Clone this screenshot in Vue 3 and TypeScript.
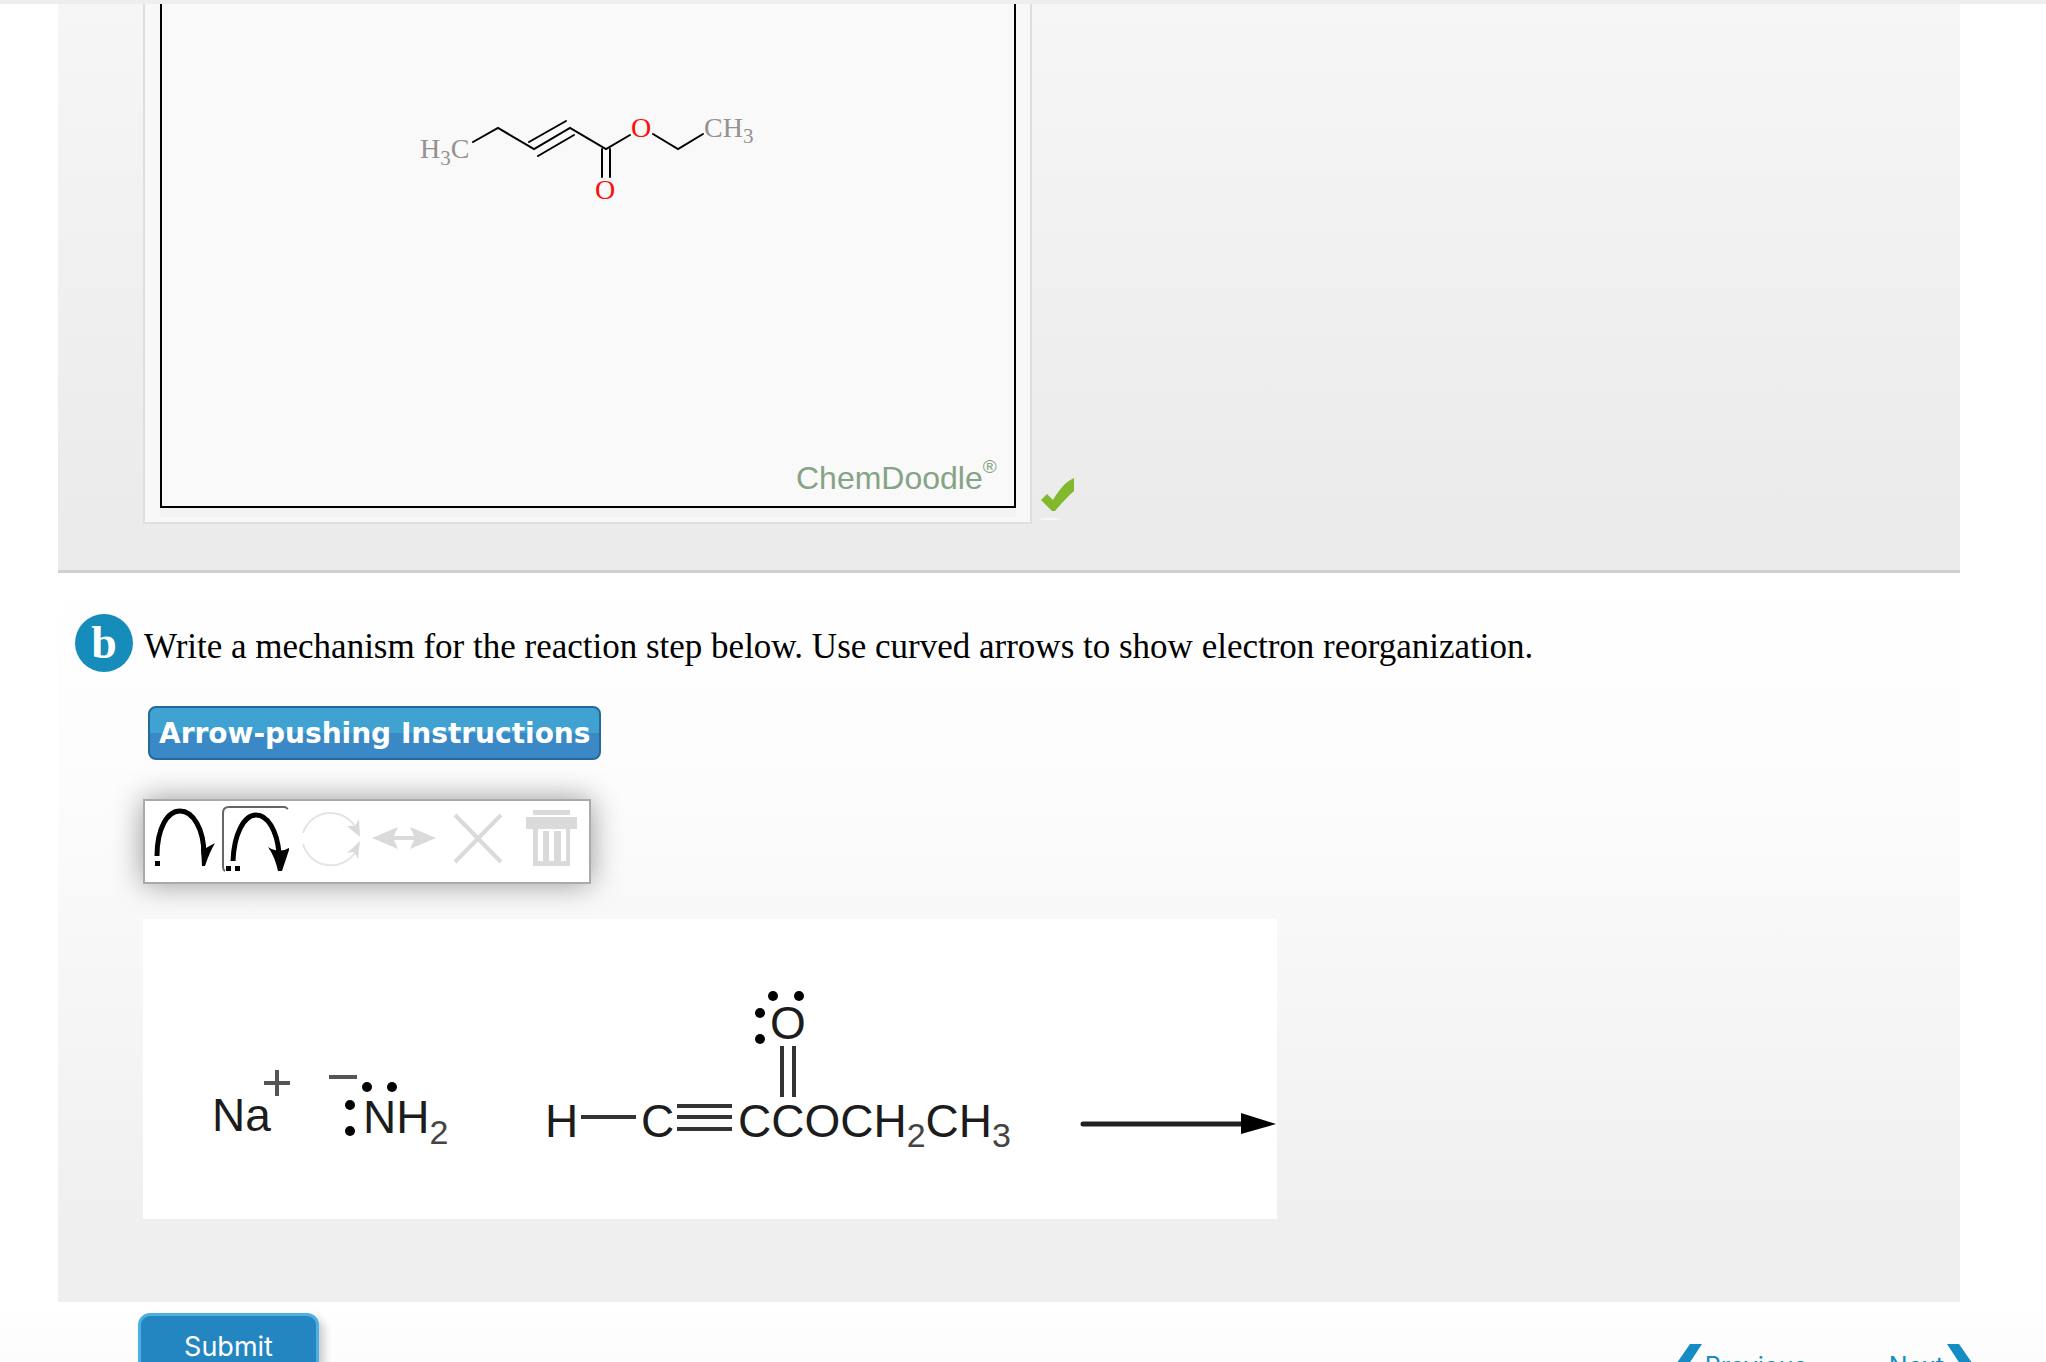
<script setup lang="ts">
import { ref } from 'vue'

type Tool = 'single' | 'double'
const activeTool = ref<Tool>('double')
</script>

<template>
  <main class="page">
    <div class="top-strip"></div>

    <section class="part part-a" aria-label="Part a">
      <div class="sketch-row">
        <div class="frame">
          <div class="canvas">
            <svg class="drawing" viewBox="0 0 852 502" role="img" aria-label="Ethyl pent-2-ynoate">
              <g class="bond">
                <path d="M311 138 L336 124 L372 145 L408 124 L444 145 L468 131" />
                <path d="M367 138 L404 117 M376 152 L412 131" />
                <path d="M440 145 V173 M448 145 V173" />
                <path d="M491 130 L516 145 L541 130" />
              </g>
              <g class="atom">
                <text x="258" y="154">H<tspan class="atom-sub" dy="7">3</tspan><tspan dy="-7">C</tspan></text>
                <text x="542" y="133">CH<tspan class="atom-sub" dy="6">3</tspan></text>
                <text class="oxygen" x="479" y="133">O</text>
                <text class="oxygen" x="443" y="195">O</text>
              </g>
              <text class="brand" x="634" y="485">ChemDoodle<tspan class="brand-mark" dy="-16">®</tspan></text>
            </svg>
          </div>
          <div class="canvas-foot"></div>
        </div>
        <svg class="check" viewBox="0 0 36 46" role="img" aria-label="Correct">
          <path d="M3 22 L9 16 L15 22 C21 12 27 4 36 0 V13 C29 19 23 26 17 33 H14 Z" fill="#82b92c" />
          <ellipse cx="12" cy="41" rx="11" ry="1" fill="#f7f7f7" />
        </svg>
      </div>
    </section>

    <section class="part part-b" aria-labelledby="question-b">
      <header class="question">
        <span class="letter">b</span>
        <p id="question-b" class="prompt">
          Write a mechanism for the reaction step below. Use curved arrows to show electron reorganization.
        </p>
      </header>

      <button type="button" class="instructions">Arrow-pushing Instructions</button>

      <div class="toolbar" role="toolbar" aria-label="Arrow tools">
        <button type="button" class="tool" aria-label="Single electron arrow" :aria-pressed="activeTool === 'single'" @click="activeTool = 'single'">
          <svg viewBox="0 0 74 81">
            <path d="M12 55 C12 28 22 10 35 10 C48 10 59 28 59 54" fill="none" stroke="#000" stroke-width="5" />
            <path d="M56 46 L61 47 L70 42 C66 49 63 56 60 65 H57 Z" />
            <rect x="10" y="60" width="5" height="5" />
          </svg>
        </button>
        <button type="button" class="tool" aria-label="Electron pair arrow" :aria-pressed="activeTool === 'double'" @click="activeTool = 'double'">
          <svg viewBox="0 0 74 81">
            <path v-if="activeTool === 'double'" d="M6 70 Q4 69 4 66 V12 Q4 6 10 6 H66 L69 8" fill="none" stroke="#666" stroke-width="2" />
            <path d="M14 60 C15 33 25 14 37 14 C49 14 58 30 60 52" fill="none" stroke="#000" stroke-width="5" />
            <path d="M49 46 Q60 53 70 47 V49 L63 70 H59 C57 61 54 53 49 46 Z" />
            <rect x="7" y="65" width="5" height="5" />
            <rect x="16" y="65" width="5" height="5" />
          </svg>
        </button>
        <button type="button" class="tool" aria-label="Rotate" disabled>
          <svg viewBox="0 0 74 81">
            <path d="M10 32 A29 29 0 0 1 63 27 M10 43 A29 29 0 0 0 63 50" fill="none" stroke="#e4e4e4" stroke-width="2" />
            <path d="M67 36 L66 18 L62 25 L54 25 Z M67 40 L54 52 L61 51 L65 58 Z" />
          </svg>
        </button>
        <button type="button" class="tool" aria-label="Resonance arrow" disabled>
          <svg viewBox="0 0 74 81">
            <path d="M24 37 H50" fill="none" stroke="#dadada" stroke-width="4" />
            <path d="M5 37 L31 26 L26 37 L31 48 Z M69 37 L43 26 L48 37 L43 48 Z" />
          </svg>
        </button>
        <button type="button" class="tool" aria-label="Delete arrow" disabled>
          <svg viewBox="0 0 74 81">
            <path d="M14 14 L60 61 M60 14 L14 61" fill="none" stroke="#dadada" stroke-width="4" />
          </svg>
        </button>
        <button type="button" class="tool" aria-label="Clear all" disabled>
          <svg viewBox="0 0 74 81">
            <path fill-rule="evenodd" d="M18 9 H55 V14 H18 Z M11 16 H62 V28 H55 V65 H18 V28 H11 Z M23 28 V60 H51 V28 Z" />
            <path d="M28 30 H34 V61 H28 Z M39 30 H46 V61 H39 Z" />
          </svg>
        </button>
      </div>

      <svg class="reaction" viewBox="0 0 1134 300" role="img" aria-label="Sodium amide with ethyl propiolate">
        <g class="formula">
          <text x="69" y="212">Na</text>
          <text x="220" y="214">NH<tspan class="formula-sub" dy="11">2</tspan></text>
          <text x="402" y="218">H</text>
          <text x="498" y="218">C</text>
          <text x="595" y="218">CCOCH<tspan class="formula-sub" dy="10">2</tspan><tspan dy="-10">CH</tspan><tspan class="formula-sub" dy="10">3</tspan></text>
          <text x="627" y="120">O</text>
        </g>
        <g class="charge">
          <path d="M121 164 H147 M134 151 V177" />
          <path d="M186 158 H214" />
        </g>
        <g class="link">
          <path d="M438 198 H493" />
          <path d="M534 187 H589 M534 198 H589 M534 210 H589" />
          <path d="M639 127 V178 M651 127 V178" />
        </g>
        <g class="electrons">
          <circle cx="224" cy="168" r="5" />
          <circle cx="249" cy="168" r="5" />
          <circle cx="207" cy="186" r="5" />
          <circle cx="207" cy="212" r="5" />
          <circle cx="630" cy="77" r="5" />
          <circle cx="656" cy="77" r="5" />
          <circle cx="617" cy="94" r="5" />
          <circle cx="617" cy="120" r="5" />
        </g>
        <path d="M940 205 H1100" fill="none" stroke="#222" stroke-width="5" stroke-linecap="round" />
        <path d="M1098 194 L1133 205 L1098 215 Z" />
      </svg>
    </section>

    <footer class="actions">
      <button type="button" class="submit">Submit</button>
      <nav class="pager" aria-label="Question">
        <a href="#previous">
          <svg viewBox="0 0 30 52"><path d="M18 0 H30 L13 26 L30 52 H18 L0 26 Z" /></svg>
          <span>Previous</span>
        </a>
        <a href="#next">
          <span>Next</span>
          <svg viewBox="0 0 30 52"><path d="M12 0 H0 L17 26 L0 52 H12 L30 26 Z" /></svg>
        </a>
      </nav>
    </footer>
  </main>
</template>

<style>
body {
  margin: 0;
  background: #fff;
}
</style>

<style scoped>
.page {
  height: 100vh;
  overflow: hidden;
  font-family: "Liberation Serif", "Times New Roman", serif;
  color: #000;
}

.top-strip {
  height: 4px;
  background: #eee;
}

.part {
  margin: 0 86px 0 58px;
}

.part-a {
  padding: 0 85px 46px;
  border-bottom: 3px solid #d0d0d0;
  background: linear-gradient(#f6f6f6, #ebebeb 90%);
}

.sketch-row {
  display: flex;
  align-items: flex-end;
  gap: 6px;
}

.frame {
  flex: none;
  padding: 0 14px 5px 15px;
  border: 2px solid #dfdfdf;
  border-top: 0;
  background: #f8f8f8;
}

.canvas {
  border: 2px solid #000;
  border-top: 0;
  background: #f9f9f9;
}

.drawing {
  display: block;
  width: 852px;
}

.canvas-foot {
  height: 9px;
  background: #f3f3f3;
}

.bond {
  fill: none;
  stroke: #000;
  stroke-width: 2;
  stroke-linecap: round;
}

.atom {
  font-size: 28px;
  fill: #979090;
}

.atom-sub {
  font-size: 21px;
}

.oxygen {
  fill: #ff0d0d;
  text-anchor: middle;
}

.brand {
  font-family: "Liberation Sans", Arial, sans-serif;
  font-size: 32px;
  fill: #86a386;
}

.brand-mark {
  font-size: 19px;
}

.check {
  flex: none;
  width: 36px;
  height: 46px;
}

.part-b {
  display: flex;
  flex-direction: column;
  align-items: flex-start;
  padding: 41px 17px 83px;
  background: linear-gradient(#fff, #fcfcfc 30%, #efefef 90%);
}

.question {
  display: flex;
  gap: 11px;
}

.letter {
  flex: none;
  width: 58px;
  height: 58px;
  border-radius: 50%;
  background: #158cba;
  color: #fff;
  font-size: 46px;
  font-weight: bold;
  line-height: 58px;
  text-align: center;
}

.prompt {
  margin: 0;
  font-size: 35px;
  line-height: 66px;
  height: 58px;
}

.instructions {
  height: 54px;
  margin: 34px 0 0 73px;
  padding: 0 9px;
  border: 2px solid #24699c;
  border-radius: 8px;
  background: linear-gradient(#3fa2d1 50%, #3a89c6 50%);
  color: #fff;
  font: bold 28px "DejaVu Sans", Verdana, sans-serif;
}

.toolbar {
  display: flex;
  margin: 39px 0 0 68px;
  border: 2px solid #aaa;
  background: #fff;
  box-shadow: 0 0 30px rgba(0, 0, 0, 0.4);
}

.tool {
  width: 74px;
  height: 81px;
  padding: 0;
  border: 0;
  background: none;
}

.tool svg {
  display: block;
  fill: #000;
}

.tool:disabled svg {
  fill: #dadada;
}

.reaction {
  width: 1134px;
  margin: 35px 0 0 68px;
  background: #fff;
}

.formula {
  font-family: "Liberation Sans", Arial, sans-serif;
  font-size: 46px;
  fill: #1c1c1c;
}

.formula-sub {
  font-size: 34px;
  fill: #444;
}

.charge,
.link {
  fill: none;
  stroke: #333;
  stroke-width: 4;
}

.charge {
  stroke: #555;
}

.actions {
  display: flex;
  align-items: flex-start;
  justify-content: space-between;
  padding: 11px 69px 0 138px;
  background: linear-gradient(#fff, #fafafa);
}

.submit {
  width: 181px;
  height: 66px;
  padding: 0;
  border: 3px solid #4db0e2;
  border-radius: 12px;
  background: #2386c1;
  box-shadow: 5px 5px 8px rgba(0, 0, 0, 0.2);
  color: #fff;
  font: 27px Inter, sans-serif;
}

.pager {
  display: flex;
  gap: 82px;
  padding-top: 31px;
  font: 25px Inter, sans-serif;
}

.pager a {
  display: flex;
  align-items: flex-start;
  gap: 3px;
  color: #158cc4;
  text-decoration: none;
}

.pager svg {
  width: 30px;
  height: 52px;
  fill: #158cc4;
}

.pager span {
  line-height: 44px;
}
</style>
